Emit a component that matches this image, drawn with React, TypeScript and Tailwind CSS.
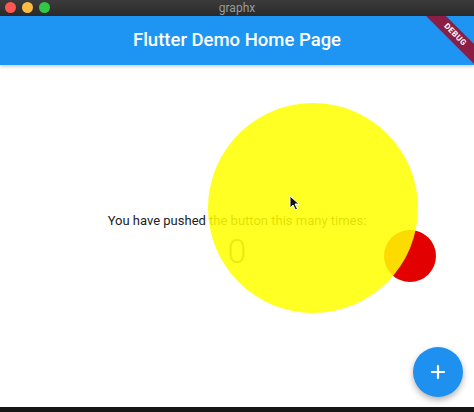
import React from "react";

function TrafficLights() {
  return (
    <div className="absolute left-[5px] top-[2px] flex items-center gap-[6px]">
      <span className="block h-[11px] w-[11px] rounded-full bg-[#fc5753]" />
      <span className="block h-[11px] w-[11px] rounded-full bg-[#fdbc40]" />
      <span className="block h-[11px] w-[11px] rounded-full bg-[#33c748]" />
    </div>
  );
}

function DebugBanner() {
  return (
    <div className="pointer-events-none absolute right-0 top-0 h-[60px] w-[60px] overflow-hidden">
      <div className="absolute right-[-26px] top-[12px] flex h-[14px] w-[90px] rotate-45 items-center justify-center bg-[#8c1d45]">
        <span className="text-[8px] font-bold leading-none tracking-[0.5px] text-white">DEBUG</span>
      </div>
    </div>
  );
}

function Cursor() {
  return (
    <svg className="absolute left-[289px] top-[130px]" width="12" height="16" viewBox="0 0 12 16">
      <path d="M1 1 L1 13 L4 10 L6.5 15 L8.5 14 L6 9 L10 9 Z" fill="#111" stroke="#fff" strokeWidth="1" />
    </svg>
  );
}

export default function App() {
  return (
    <div className="flex h-[412px] w-[474px] flex-col overflow-hidden bg-white font-['Roboto',_'Noto_Sans',_sans-serif]">
      {/* window title bar */}
      <div className="relative flex h-[16px] shrink-0 items-center justify-center bg-gradient-to-b from-[#3b3b3b] to-[#2a2a2a]">
        <TrafficLights />
        <span className="text-[12px] leading-none text-[#9b9b9b]">graphx</span>
      </div>

      {/* app bar */}
      <header className="relative z-10 flex h-[49px] shrink-0 items-center justify-center bg-[#1e95f2] shadow-[0_2px_3px_rgba(0,0,0,0.18)]">
        <h1 className="text-[18.5px] font-medium text-white">Flutter Demo Home Page</h1>
        <DebugBanner />
      </header>

      {/* body */}
      <main className="relative flex flex-1 flex-col items-center justify-center pt-[10px]">
        <p className="text-[13px] text-[#222]">You have pushed the button this many times:</p>
        <p className="text-[34px] font-light leading-[40px] text-[#6b6b6b]">0</p>

        <div className="absolute left-[384px] top-[165px] h-[52px] w-[52px] rounded-full bg-[#e20000]" />
        <div className="absolute left-[208px] top-[38px] h-[210px] w-[210px] rounded-full bg-[#ffff00] opacity-[0.86]" />
        <Cursor />

        <button className="absolute bottom-[10px] right-[11px] flex h-[50px] w-[50px] items-center justify-center rounded-full bg-[#1e90f0] shadow-[0_3px_6px_rgba(0,0,0,0.3)]">
          <svg width="16" height="16" viewBox="0 0 16 16">
            <path d="M8 2 V14 M2 8 H14" stroke="#fff" strokeWidth="2.2" strokeLinecap="round" />
          </svg>
        </button>
      </main>

      {/* bottom strip */}
      <div className="h-[5px] shrink-0 bg-[#161616]" />
    </div>
  );
}
